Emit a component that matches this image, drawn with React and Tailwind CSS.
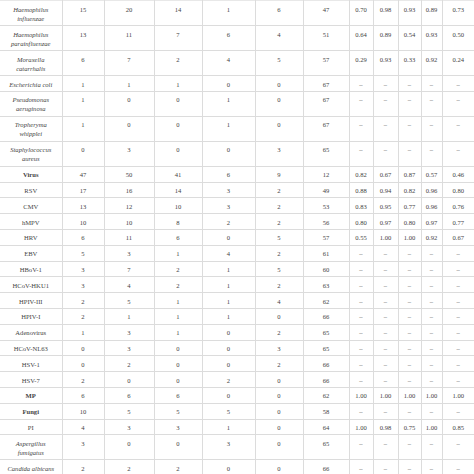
const rows = [
  { name: ["Haemophilus", "influenzae"], italic: true, v: [15, 20, 14, 1, 6, 47], m: ["0.70", "0.98", "0.93", "0.89", "0.73"] },
  { name: ["Haemophilus", "parainfluenzae"], italic: true, v: [13, 11, 7, 6, 4, 51], m: ["0.64", "0.89", "0.54", "0.93", "0.50"] },
  { name: ["Moraxella", "catarrhalis"], italic: true, v: [6, 7, 2, 4, 5, 57], m: ["0.29", "0.93", "0.33", "0.92", "0.24"] },
  { name: ["Escherichia coli"], italic: true, v: [1, 1, 1, 0, 0, 67] },
  { name: ["Pseudomonas", "aeruginosa"], italic: true, v: [1, 0, 0, 1, 0, 67] },
  { name: ["Tropheryma", "whipplei"], italic: true, v: [1, 0, 0, 1, 0, 67] },
  { name: ["Staphylococcus", "aureus"], italic: true, v: [0, 3, 0, 0, 3, 65] },
  { name: ["Virus"], bold: true, v: [47, 50, 41, 6, 9, 12], m: ["0.82", "0.67", "0.87", "0.57", "0.46"] },
  { name: ["RSV"], v: [17, 16, 14, 3, 2, 49], m: ["0.88", "0.94", "0.82", "0.96", "0.80"] },
  { name: ["CMV"], v: [13, 12, 10, 3, 2, 53], m: ["0.83", "0.95", "0.77", "0.96", "0.76"] },
  { name: ["hMPV"], v: [10, 10, 8, 2, 2, 56], m: ["0.80", "0.97", "0.80", "0.97", "0.77"] },
  { name: ["HRV"], v: [6, 11, 6, 0, 5, 57], m: ["0.55", "1.00", "1.00", "0.92", "0.67"] },
  { name: ["EBV"], v: [5, 3, 1, 4, 2, 61] },
  { name: ["HBoV-1"], v: [3, 7, 2, 1, 5, 60] },
  { name: ["HCoV-HKU1"], v: [3, 4, 2, 1, 2, 63] },
  { name: ["HPIV-III"], v: [2, 5, 1, 1, 4, 62] },
  { name: ["HPIV-I"], v: [2, 1, 1, 1, 0, 66] },
  { name: ["Adenovirus"], v: [1, 3, 1, 0, 2, 65] },
  { name: ["HCoV-NL63"], v: [0, 3, 0, 0, 3, 65] },
  { name: ["HSV-1"], v: [0, 2, 0, 0, 2, 66] },
  { name: ["HSV-7"], v: [2, 0, 0, 2, 0, 66] },
  { name: ["MP"], bold: true, v: [6, 6, 6, 0, 0, 62], m: ["1.00", "1.00", "1.00", "1.00", "1.00"] },
  { name: ["Fungi"], bold: true, v: [10, 5, 5, 5, 0, 58] },
  { name: ["PI"], v: [4, 3, 3, 1, 0, 64], m: ["1.00", "0.98", "0.75", "1.00", "0.85"] },
  { name: ["Aspergillus", "fumigatus"], italic: true, v: [3, 0, 0, 3, 0, 65] },
  { name: ["Candida albicans"], italic: true, v: [2, 2, 2, 0, 0, 66] },
];

const widths = ["w-[62px]", "w-[42px]", "w-[50px]", "w-[48px]", "w-[53px]", "w-[48px]", "w-[46px]", "w-[24px]", "w-[25px]", "w-[23px]", "w-[21px]", "w-[32px]"];

const cell = "align-top text-center pt-[3.5px] px-0 border-b border-r border-[#dcdcdc] whitespace-nowrap";

export default function App() {
  return (
    <div className="w-[474px] h-[474px] overflow-hidden bg-white">
      <table
        className="table-fixed border-collapse w-[474px] text-[6.6px] leading-[9px] text-[#454545] border-t border-[#e8e8e8]"
        style={{ fontFamily: '"Liberation Serif", "DejaVu Serif", serif' }}
      >
        <colgroup>
          {widths.map((w, i) => (
            <col key={i} className={w} />
          ))}
        </colgroup>
        <tbody>
          {rows.map((r) => {
            const metrics = r.m ?? ["–", "–", "–", "–", "–"];
            const h = r.name.length > 1 ? "h-[25px]" : "h-[15.8px]";
            return (
              <tr key={r.name.join(" ")} className={h}>
                <td className={`${cell} ${r.italic ? "italic" : ""} ${r.bold ? "font-bold" : ""}`}>
                  {r.name.map((n, i) => (
                    <div key={i}>{n}</div>
                  ))}
                </td>
                {r.v.map((x, i) => (
                  <td key={i} className={cell}>{x}</td>
                ))}
                {metrics.map((x, i) => (
                  <td key={i} className={`${cell} ${i === 4 ? "border-r-0" : ""}`}>{x}</td>
                ))}
              </tr>
            );
          })}
        </tbody>
      </table>
    </div>
  );
}
